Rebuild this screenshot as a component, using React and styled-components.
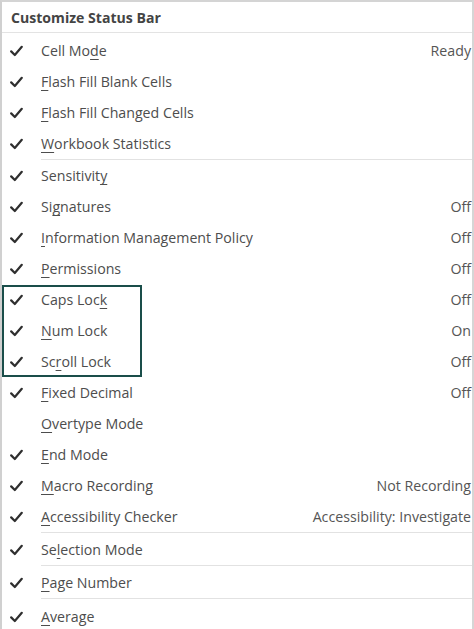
import React from "react";
import styled, { createGlobalStyle } from "styled-components";

const Global = createGlobalStyle`
  html, body { margin: 0; padding: 0; background: #fff; }
  body { font-family: "Open Sans", "Noto Sans", sans-serif; }
`;

const Menu = styled.div`
  box-sizing: border-box;
  width: 474px;
  height: 629px;
  overflow: hidden;
  background: #fff;
  border-top: 2px solid #d4d4d4;
  border-left: 2px solid #d0d0d0;
  border-right: 2px solid #d6d6d6;
`;

const Header = styled.div`
  height: 30px;
  display: flex;
  align-items: center;
  padding-left: 9px;
  font-size: 14.1px;
  font-weight: 700;
  color: #444;
  border-bottom: 1px solid #e3e3e3;
  margin-bottom: 2px;
`;

const Group = styled.div`
  position: relative;
  ${(p) =>
    p.$highlight &&
    `
    &::after {
      content: "";
      position: absolute;
      left: 0;
      top: 1px;
      bottom: 0;
      width: 140px;
      box-sizing: border-box;
      border: 2px solid #1a4e4a;
      pointer-events: none;
    }
  `}
`;

const Separator = styled.div`
  margin-left: 39px;
  border-top: 1px solid #e2e2e2;
  height: ${(p) => p.$space || 0}px;
`;

const Row = styled.div`
  height: 31px;
  display: grid;
  grid-template-columns: 39px 1fr auto;
  align-items: center;
  font-size: 14.2px;
  color: #4d4d4d;
`;

const CheckCell = styled.div`
  display: flex;
  align-items: center;
  padding-left: 8px;
  height: 100%;
`;

const Label = styled.span`
  white-space: nowrap;
`;

const Key = styled.span`
  text-decoration: underline;
  text-decoration-thickness: 1px;
  text-underline-offset: 3px;
`;

const Value = styled.span`
  white-space: nowrap;
  padding-right: 1px;
  color: #555;
`;

const Check = () => (
  <svg width="13" height="12" viewBox="0 0 13 12">
    <path
      d="M1.2 6.4 L4.8 10 L11.8 1.8"
      fill="none"
      stroke="#2f2f2f"
      strokeWidth="2.2"
      strokeLinecap="round"
      strokeLinejoin="round"
    />
  </svg>
);

const renderLabel = (text) => {
  const i = text.indexOf("&");
  if (i < 0) return text;
  return (
    <>
      {text.slice(0, i)}
      <Key>{text[i + 1]}</Key>
      {text.slice(i + 2)}
    </>
  );
};

const groups = [
  {
    items: [
      { l: "Cell Mo&de", v: "Ready", c: true },
      { l: "&Flash Fill Blank Cells", c: true },
      { l: "&Flash Fill Changed Cells", c: true },
      { l: "&Workbook Statistics", c: true },
    ],
  },
  {
    items: [
      { l: "Sensitivit&y", c: true },
      { l: "Si&gnatures", v: "Off", c: true },
      { l: "&Information Management Policy", v: "Off", c: true },
      { l: "&Permissions", v: "Off", c: true },
    ],
  },
  {
    highlight: true,
    noSep: true,
    items: [
      { l: "Caps Loc&k", v: "Off", c: true },
      { l: "&Num Lock", v: "On", c: true },
      { l: "Sc&roll Lock", v: "Off", c: true },
    ],
  },
  {
    noSep: true,
    items: [
      { l: "&Fixed Decimal", v: "Off", c: true },
      { l: "&Overtype Mode", c: false },
      { l: "&End Mode", c: true },
      { l: "&Macro Recording", v: "Not Recording", c: true },
      { l: "&Accessibility Checker", v: "Accessibility: Investigate", c: true },
    ],
  },
  { space: 1, items: [{ l: "Se&lection Mode", c: true }] },
  { space: 1, items: [{ l: "&Page Number", c: true }] },
  { space: 2, items: [{ l: "&Average", c: true }] },
];

export default function App() {
  return (
    <>
      <Global />
      <Menu>
        <Header>Customize Status Bar</Header>
        {groups.map((g, gi) => (
          <React.Fragment key={gi}>
            {gi > 0 && !g.noSep && <Separator $space={g.space} />}
            <Group $highlight={g.highlight}>
              {g.items.map((it, ii) => (
                <Row key={ii}>
                  <CheckCell>{it.c && <Check />}</CheckCell>
                  <Label>{renderLabel(it.l)}</Label>
                  <Value>{it.v || ""}</Value>
                </Row>
              ))}
            </Group>
          </React.Fragment>
        ))}
      </Menu>
    </>
  );
}
